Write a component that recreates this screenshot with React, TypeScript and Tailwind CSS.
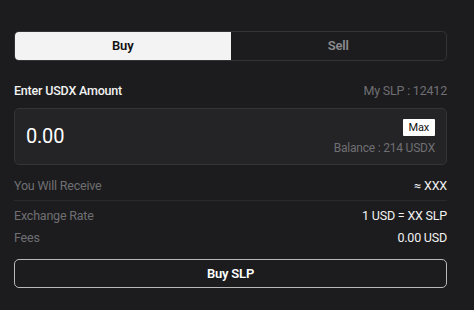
import { useState } from 'react'

type Side = 'buy' | 'sell'

function Row({ label, value }: { label: string; value: string }) {
  return (
    <div className="flex items-center justify-between text-[12.5px] leading-none">
      <span className="text-[#6f6f73]">{label}</span>
      <span className="text-[#f2f2f2]">{value}</span>
    </div>
  )
}

export default function App() {
  const [side, setSide] = useState<Side>('buy')

  return (
    <div
      className="w-[474px] h-[310px] bg-[#1c1c1e] pl-[14px] pr-[27px] pt-[31px] text-white overflow-hidden tracking-[-0.2px]"
      style={{ fontFamily: 'Roboto, "Noto Sans", sans-serif' }}
    >
      {/* Buy / Sell toggle */}
      <div className="flex h-[30px] rounded-[5px] border border-[#333336] overflow-hidden">
        <button
          onClick={() => setSide('buy')}
          className={
            side === 'buy'
              ? 'flex-1 bg-[#f3f3f3] text-[#111] text-[13px] font-semibold'
              : 'flex-1 text-[#8a8a8e] text-[13px] font-semibold'
          }
        >
          Buy
        </button>
        <button
          onClick={() => setSide('sell')}
          className={
            side === 'sell'
              ? 'flex-1 bg-[#f3f3f3] text-[#111] text-[13px] font-semibold'
              : 'flex-1 text-[#8a8a8e] text-[13px] font-semibold'
          }
        >
          Sell
        </button>
      </div>

      {/* Amount */}
      <div className="mt-[24px] flex items-center justify-between text-[12.5px] leading-none">
        <span className="text-[#f2f2f2] font-medium">Enter USDX Amount</span>
        <span className="text-[#6f6f73]">My SLP : 12412</span>
      </div>

      <div className="mt-[10px] h-[57px] rounded-[5px] border border-[#343437] bg-[#242426] flex items-center justify-between pl-[11px] pr-[11px]">
        <span className="text-[20px] text-white">0.00</span>
        <div className="flex flex-col items-end gap-[6px]">
          <button className="bg-white text-[#111] text-[11px] leading-none px-[6px] py-[3px] rounded-[1px]">
            Max
          </button>
          <span className="text-[12px] leading-none text-[#6f6f73]">Balance : 214 USDX</span>
        </div>
      </div>

      {/* Summary */}
      <div className="mt-[15px]">
        <Row label="You Will Receive" value="≈ XXX" />
      </div>
      <div className="mt-[8px] border-t border-[#2a2a2c]" />
      <div className="mt-[9px] flex flex-col gap-[9px]">
        <Row label="Exchange Rate" value="1 USD = XX SLP" />
        <Row label="Fees" value="0.00 USD" />
      </div>

      <button className="mt-[15px] w-full h-[29px] rounded-[5px] border border-[#b8b8bb] text-[13px] font-semibold text-white">
        Buy SLP
      </button>
    </div>
  )
}
